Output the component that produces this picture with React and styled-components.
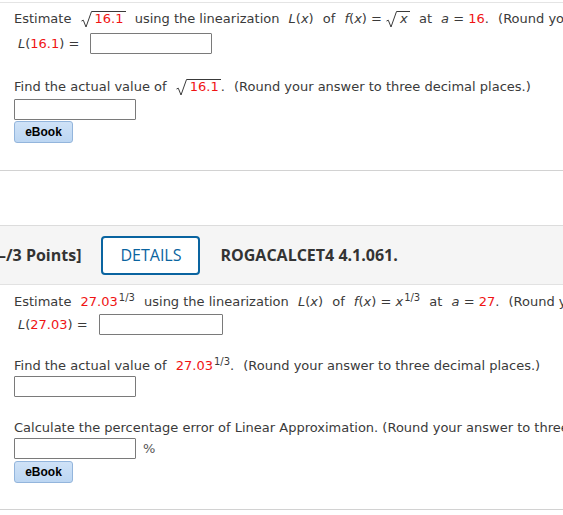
import styled, { createGlobalStyle } from 'styled-components'

const GlobalStyle = createGlobalStyle`
html, body {
    margin: 0;
    padding: 0;
    background: #FFFFFF;
    overflow: hidden;
}
body {
    font-family: "DejaVu Sans", Verdana, sans-serif;
    font-size: 13px;
    color: #3a3a3a;
}
`

const Page = styled.div`
width: 563px;
overflow: hidden;
padding-top: 2px;
`

const Question = styled.section`
border-top: ${props => props.$top ? '1px solid #e4e4e4' : '0'};
border-bottom: 1px solid #d2d2d2;
padding: ${props => props.$top ? '7px 0 27px 14px' : '8px 0 26px 14px'};
`

const Line = styled.div`
display: block;
white-space: nowrap;
line-height: 18px;
height: 18px;
margin-top: ${props => props.$mt || 0}px;
`

const Red = styled.span`
color: #f01414;
`

const Math = styled.span`
margin: 0 5px;
white-space: pre;
`

const Var = styled.i`
font-style: italic;
`

const Sup = styled.sup`
font-size: 10px;
line-height: 0;
vertical-align: 5px;
margin-left: 1px;
`

const RadicalWrap = styled.span`
display: inline-flex;
align-items: flex-start;
vertical-align: baseline;
svg {
    flex: none;
}
`

const Radicand = styled.span`
align-self: baseline;
border-top: 1px solid #3a3a3a;
padding: 0 2px 0 3px;
line-height: 14px;
`

const Radical = ({ children }) => (
    <RadicalWrap>
        <svg width="11" height="17" viewBox="0 0 11 17">
            <path d="M0.5 10 L2.3 9.2 L5 16 L10.5 0.5 L11 0.5" fill="none" stroke="#3a3a3a" strokeWidth="1" />
        </svg>
        <Radicand>{children}</Radicand>
    </RadicalWrap>
)

const Input = styled.input`
box-sizing: border-box;
width: ${props => props.$w || 122}px;
height: 21px;
margin: 0;
border: 1px solid #7a7a7a;
border-radius: 1px;
background: #FFFFFF;
padding: 0 3px;
`

const AnswerRow = styled.div`
display: flex;
align-items: center;
gap: ${props => props.$gap || 7}px;
height: 21px;
margin-top: ${props => props.$mt || 0}px;
line-height: 18px;
white-space: pre;
`

const Lhs = styled.span`
margin-left: 4px;
`

const Unit = styled.span`
color: #555;
`

const EBook = styled.button`
box-sizing: border-box;
display: block;
width: 59px;
height: 22px;
margin-top: ${props => props.$mt || 0}px;
padding: 0;
font-family: "Liberation Sans", Arial, sans-serif;
font-weight: 700;
font-size: 12px;
color: #000;
background: linear-gradient(#cfe2f7, #bcd6f2);
border: 1px solid #93b5dc;
border-radius: 3px;
`

const Spacer = styled.div`
height: 54px;
`

const Band = styled.header`
display: flex;
align-items: center;
gap: 20px;
height: 58px;
background: #f5f5f5;
border-top: 1px solid #dcdcdc;
border-bottom: 1px solid #e2e2e2;
font-family: "Open Sans", sans-serif;
font-size: 16px;
white-space: nowrap;
`

const Points = styled.span`
font-weight: 700;
color: #333;
margin-left: -2px;
`

const Details = styled.button`
box-sizing: border-box;
width: 99px;
height: 39px;
border: 2px solid #0a64a0;
border-radius: 4px;
background: #FFFFFF;
color: #0a64a0;
font-family: "Open Sans", sans-serif;
font-size: 16px;
padding: 0;
`

const Code = styled.span`
font-weight: 700;
color: #333;
`

const App = () => {
    return (
        <Page>
            <GlobalStyle />
            <Question $top>
                <Line>
                    Estimate <Math><Radical><Red>16.1</Red></Radical></Math> using the linearization <Math><Var>L</Var>(<Var>x</Var>)</Math> of <Math><Var>f</Var>(<Var>x</Var>) = <Radical><Var>x</Var></Radical></Math> at <Math><Var>a</Var> = <Red>16</Red>.</Math> (Round your answer to three decimal places.)
                </Line>
                <AnswerRow $mt={5} $gap={11}>
                    <Lhs><Var>L</Var>(<Red>16.1</Red>) =</Lhs>
                    <Input />
                </AnswerRow>
                <Line $mt={24}>
                    Find the actual value of <Math><Radical><Red>16.1</Red></Radical>.</Math> (Round your answer to three decimal places.)
                </Line>
                <AnswerRow $mt={3}>
                    <Input />
                </AnswerRow>
                <EBook $mt={1}>eBook</EBook>
            </Question>
            <Spacer />
            <Band>
                <Points>–/3 Points]</Points>
                <Details>DETAILS</Details>
                <Code>ROGACALCET4 4.1.061.</Code>
            </Band>
            <Question>
                <Line>
                    Estimate <Math><Red>27.03</Red><Sup>1/3</Sup></Math> using the linearization <Math><Var>L</Var>(<Var>x</Var>)</Math> of <Math><Var>f</Var>(<Var>x</Var>) = <Var>x</Var><Sup>1/3</Sup></Math> at <Math><Var>a</Var> = <Red>27</Red>.</Math> (Round your answer to three decimal places.)
                </Line>
                <AnswerRow $mt={3} $gap={11}>
                    <Lhs><Var>L</Var>(<Red>27.03</Red>) =</Lhs>
                    <Input $w={124} />
                </AnswerRow>
                <Line $mt={22}>
                    Find the actual value of <Math><Red>27.03</Red><Sup>1/3</Sup>.</Math> (Round your answer to three decimal places.)
                </Line>
                <AnswerRow $mt={1}>
                    <Input />
                </AnswerRow>
                <Line $mt={22}>
                    Calculate the percentage error of Linear Approximation. (Round your answer to three decimal places.)
                </Line>
                <AnswerRow $mt={1}>
                    <Input />
                    <Unit>%</Unit>
                </AnswerRow>
                <EBook $mt={2}>eBook</EBook>
            </Question>
        </Page>
    )
}

export default App
